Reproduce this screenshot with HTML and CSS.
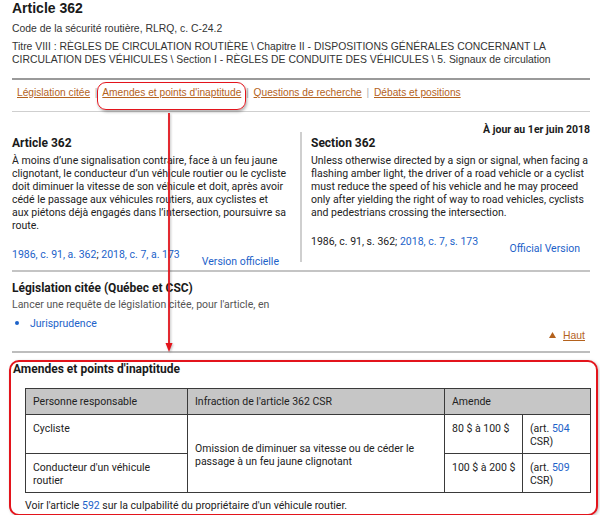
FILE: index.html
```html
<!DOCTYPE html>
<html lang="fr">
<head>
<meta charset="utf-8">
<title>Article 362</title>
<link rel="stylesheet" href="styles.css">
</head>
<body>
<div class="page">
  <h1 class="title">Article 362</h1>
  <p class="source">Code de la sécurité routière, RLRQ, c. C-24.2</p>
  <p class="path">Titre VIII : RÈGLES DE CIRCULATION ROUTIÈRE \ Chapitre II - DISPOSITIONS GÉNÉRALES CONCERNANT LA<br>CIRCULATION DES VÉHICULES \ Section I - RÈGLES DE CONDUITE DES VÉHICULES \ 5. Signaux de circulation</p>

  <nav class="tabs">
    <a href="#">Législation citée</a><span class="sep">|</span><a href="#" class="hl">Amendes et points d'inaptitude</a><span class="sep">|</span><a href="#">Questions de recherche</a><span class="sep">|</span><a href="#">Débats et positions</a>
  </nav>

  <div class="updated">À jour au 1er juin 2018</div>

  <div class="cols">
    <div class="col col-fr">
      <h2 class="col-title">Article 362</h2>
      <p class="col-text">À moins d’une signalisation contraire, face à un feu jaune clignotant, le conducteur d’un véhicule routier ou le cycliste doit diminuer la vitesse de son véhicule et doit, après avoir cédé le passage aux véhicules routiers, aux cyclistes et<br>aux piétons déjà engagés dans l’intersection, poursuivre sa route.</p>
      <div class="cite-row">
        <span class="cite"><a href="#">1986, c. 91, a. 362</a>; <a href="#">2018, c. 7, a. 173</a></span>
        <a href="#" class="version">Version officielle</a>
      </div>
    </div>
    <div class="col col-en">
      <h2 class="col-title">Section 362</h2>
      <p class="col-text">Unless otherwise directed by a sign or signal, when facing a flashing amber light, the driver of a road vehicle or a cyclist must reduce the speed of his vehicle and he may proceed only after yielding the right of way to road vehicles, cyclists and pedestrians crossing the intersection.</p>
      <div class="cite-row">
        <span class="cite">1986, c. 91, s. 362; <a href="#">2018, c. 7, s. 173</a></span>
        <a href="#" class="version">Official Version</a>
      </div>
    </div>
  </div>

  <section class="cited">
    <h2 class="sec-title">Législation citée (Québec et CSC)</h2>
    <p class="cited-text">Lancer une requête de législation citée, pour l'article, en</p>
    <ul class="cited-list">
      <li><a href="#">Jurisprudence</a></li>
    </ul>
    <div class="top-link">
      <svg class="tri" width="7" height="6" viewBox="0 0 7 6"><polygon points="3.5,0 7,6 0,6" fill="#b4621d"/></svg>
      <a href="#">Haut</a>
    </div>
  </section>

  <section class="fines">
    <h2 class="sec-title">Amendes et points d'inaptitude</h2>
    <table class="fines-table">
      <colgroup>
        <col class="c1"><col class="c2"><col class="c3"><col class="c4">
      </colgroup>
      <thead>
        <tr>
          <th>Personne responsable</th>
          <th>Infraction de l'article 362 CSR</th>
          <th colspan="2">Amende</th>
        </tr>
      </thead>
      <tbody>
        <tr>
          <td>Cycliste</td>
          <td rowspan="2" class="mid">Omission de diminuer sa vitesse ou de céder le passage à un feu jaune clignotant</td>
          <td class="amount">80 $ à 100 $</td>
          <td>(art. <a href="#">504</a> CSR)</td>
        </tr>
        <tr>
          <td>Conducteur d'un véhicule routier</td>
          <td class="amount">100 $ à 200 $</td>
          <td>(art. <a href="#">509</a> CSR)</td>
        </tr>
      </tbody>
    </table>
    <p class="note">Voir l'article <a href="#">592</a> sur la culpabilité du propriétaire d'un véhicule routier.</p>
  </section>

  <svg class="arrow" width="10" height="242" viewBox="0 0 10 242">
    <line x1="5" y1="0" x2="5" y2="232" stroke="#e3141c" stroke-width="1.8"/>
    <polygon points="1.5,230 8.5,230 5,239" fill="#e3141c"/>
  </svg>
</div>
</body>
</html>
```

FILE: styles.css
```css
* { box-sizing: border-box; }
html, body { margin: 0; padding: 0; background: #fff; }
body {
  font-family: Roboto, "Liberation Sans", Arial, sans-serif;
  color: #222;
}
a { color: #1c62c9; text-decoration: none; }

.page {
  position: relative;
  margin: 0 10px 0 12px;
}

.title {
  margin: 0;
  font: bold 14px/17px "Liberation Sans", Arial, sans-serif;
  color: #1a1a1a;
}
.source {
  margin: 4.5px 0 0;
  font: 10.4px/13px "Liberation Sans", Arial, sans-serif;
  color: #333;
}
.path {
  margin: 5.5px 0 0;
  font: 10.4px/13px "Liberation Sans", Arial, sans-serif;
  color: #333;
  white-space: nowrap;
}

.tabs {
  margin-top: 12px;
  border-top: 2px solid #9a9a9a;
  border-bottom: 1px solid #cfcfcf;
  padding: 6px 5px 11.5px;
  font: 10.2px/13px "Liberation Sans", Arial, sans-serif;
  display: flex;
  align-items: baseline;
}
.tabs a {
  color: #b4621d;
  text-decoration: underline;
}
.sep {
  color: #b0b0b0;
  margin: 0 4.8px;
}
.hl {
  position: relative;
  display: inline-block;
}
.hl::after {
  content: "";
  position: absolute;
  left: -5px;
  right: -5px;
  top: -4.5px;
  bottom: -10.5px;
  border: 1.5px solid #e3141c;
  border-radius: 9px;
  box-shadow: 1px 2px 3px rgba(0, 0, 0, 0.3);
}

.updated {
  margin-top: 11.3px;
  margin-bottom: -4px;
  text-align: right;
  font-size: 10.5px;
  line-height: 13px;
  font-weight: bold;
  color: #1a1a1a;
}

.cols {
  display: grid;
  grid-template-columns: 280px 1fr;
  column-gap: 8px;
  align-items: start;
  border-bottom: 2px solid #c4c4c4;
}
.col { padding-top: 4px; }
.col-fr { padding-bottom: 2.5px; }
.col-en {
  border-left: 2px solid #cfcfcf;
  padding-left: 9px;
  padding-bottom: 7.5px;
}
.col-title {
  margin: 0;
  font-size: 12px;
  line-height: 15px;
  font-weight: bold;
  color: #1a1a1a;
}
.col-text {
  margin: 3px 0 0;
  font-size: 10.5px;
  line-height: 13px;
  color: #222;
}
.cite-row {
  margin-top: 16px;
  display: flex;
  justify-content: space-between;
  align-items: flex-start;
  font-size: 10.5px;
  line-height: 13px;
}
.col-fr .cite-row { padding-right: 13px; }
.col-en .cite-row { padding-right: 10px; }
.version { margin-top: 7px; }

.cited {
  padding-top: 9px;
  padding-bottom: 9.5px;
  border-bottom: 2px solid #bdbdbd;
}
.sec-title {
  margin: 0;
  font-size: 12px;
  line-height: 15px;
  font-weight: bold;
  color: #1a1a1a;
}
.cited-text {
  margin: 1.5px 0 0;
  font-size: 10.5px;
  line-height: 13px;
  color: #555;
}
.cited-list {
  list-style: none;
  margin: 6px 0 0;
  padding: 0;
  font-size: 10.5px;
  line-height: 13px;
}
.cited-list li {
  display: flex;
  align-items: center;
}
.cited-list li::before {
  content: "";
  width: 4px;
  height: 4px;
  border-radius: 50%;
  background: #1c62c9;
  margin-left: 3px;
  margin-right: 11px;
}
.top-link {
  margin-top: -1px;
  padding-right: 5px;
  display: flex;
  justify-content: flex-end;
  align-items: center;
  gap: 7px;
  font: 10.4px/13px "Liberation Sans", Arial, sans-serif;
}
.top-link a {
  color: #b4621d;
  text-decoration: underline;
}

.fines {
  margin: 6.3px -8px 0 -3px;
  padding: 0 6px 2px 2px;
  border: 2px solid #e3141c;
  border-radius: 10px;
  box-shadow: 1px 1px 3px rgba(0, 0, 0, 0.25);
}
.fines-table {
  margin: 11.7px 0 0 12px;
  width: calc(100% - 12px);
  border-collapse: collapse;
  table-layout: fixed;
  font-size: 10.5px;
  line-height: 13px;
  color: #222;
}
.c1 { width: 162px; }
.c2 { width: 257px; }
.c3 { width: 78px; }
.c4 { width: 68px; }
.fines-table th,
.fines-table td {
  border: 1px solid #3a3a3a;
  padding: 7px 7px 5px;
  text-align: left;
  vertical-align: top;
}
.fines-table th {
  background: #c6c6c6;
  font-weight: normal;
  padding: 6px 7px;
}
.fines-table td.mid { vertical-align: middle; }
.fines-table td.amount {
  white-space: nowrap;
  padding-right: 4px;
}
.note {
  margin: 5.5px 0 0 12px;
  font-size: 10.5px;
  line-height: 13px;
  color: #222;
}

.arrow {
  position: absolute;
  left: 151.5px;
  top: 113px;
  filter: drop-shadow(1px 1px 1px rgba(0, 0, 0, 0.25));
}
```
